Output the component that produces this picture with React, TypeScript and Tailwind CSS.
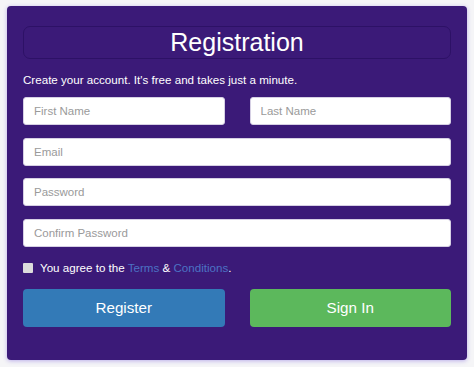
import React from 'react';

const inputCls =
  'h-[28px] w-full rounded-[3px] border border-[#d6d0e4] bg-white px-[10px] text-[11.5px] text-[#333] placeholder:text-[#9a9a9a] outline-none';

export default function App() {
  return (
    <div className="min-h-screen bg-[#f5f5f7] pl-[7px] pt-[6px] font-['Liberation_Sans',Arial,sans-serif]">
      <div className="h-[354px] w-[460px] rounded-[4px] bg-[#3b1a78] px-4 pt-5 shadow-[0_1px_4px_rgba(120,90,220,0.45)]">
        <div className="flex h-[33px] items-center justify-center rounded-[7px] border border-[#2d1166]">
          <h1 className="text-[25px] leading-none text-white">Registration</h1>
        </div>

        <p className="mt-[13px] mb-[9px] text-[11.6px] leading-4 text-white">
          Create your account. It's free and takes just a minute.
        </p>

        <div className="grid grid-cols-2 gap-[25px]">
          <input className={inputCls} placeholder="First Name" />
          <input className={inputCls} placeholder="Last Name" />
        </div>
        <input className={`${inputCls} mt-[13px]`} placeholder="Email" />
        <input className={`${inputCls} mt-[12px]`} type="password" placeholder="Password" />
        <input className={`${inputCls} mt-[13px]`} type="password" placeholder="Confirm Password" />

        <label className="mt-[13px] flex h-4 items-center text-[11.6px] text-white">
          <span className="mr-[7px] inline-block h-[10px] w-[10px] rounded-[1px] bg-[#dcdcdc]" />
          <span>
            You agree to the <a className="text-[#4c72c4]">Terms</a> &amp;{' '}
            <a className="text-[#4c72c4]">Conditions</a>.
          </span>
        </label>

        <div className="mt-[13px] grid grid-cols-2 gap-[25px]">
          <button className="h-[38px] rounded-[4px] bg-[#337ab7] text-[15.2px] text-white">Register</button>
          <button className="h-[38px] rounded-[4px] bg-[#5cb85c] text-[15.2px] text-white">Sign In</button>
        </div>
      </div>
    </div>
  );
}
